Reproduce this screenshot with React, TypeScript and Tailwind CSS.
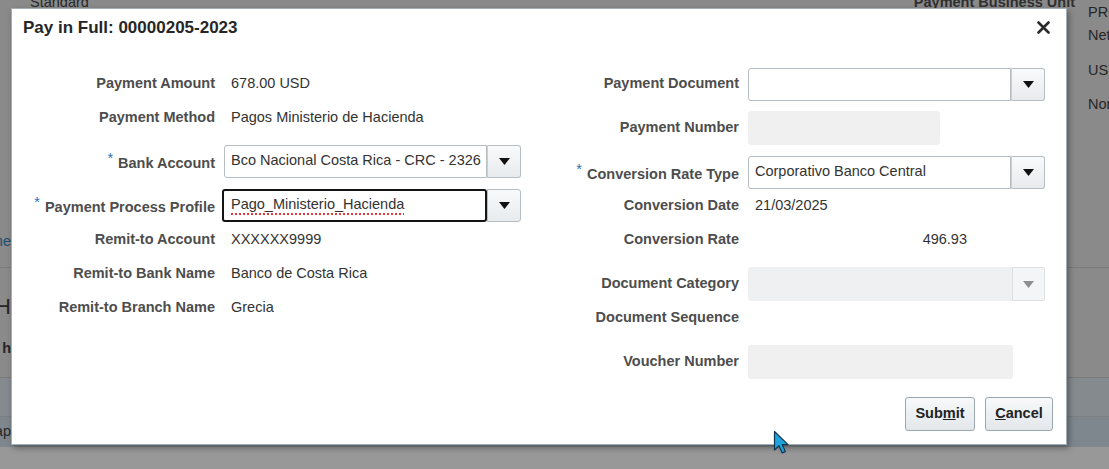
import React from "react";

const font = "font-['Liberation_Sans',Arial,sans-serif]";

function Tri({ muted = false }: { muted?: boolean }) {
  return (
    <svg width="11" height="7" viewBox="0 0 11 7">
      <polygon points="0,0 11,0 5.5,7" fill={muted ? "#8f8f8f" : "#111"} />
    </svg>
  );
}

function Label({ text, required, width }: { text: string; required?: boolean; width: string }) {
  return (
    <div className={`${width} shrink-0 text-right font-bold text-[#4d4d4d] whitespace-nowrap`}>
      {required && <span className="text-[#2b6fad] font-normal mr-[5px] align-[5px]">*</span>}
      {text}
    </div>
  );
}

function Row({
  label,
  required,
  width,
  className = "",
  children,
}: {
  label: string;
  required?: boolean;
  width: string;
  className?: string;
  children?: React.ReactNode;
}) {
  return (
    <div className={`flex items-center h-[34px] gap-[9px] ${className}`}>
      <Label text={label} required={required} width={width} />
      <div className="w-[297px] flex items-center">{children}</div>
    </div>
  );
}

function Select({ value, focused }: { value?: string; focused?: boolean }) {
  return (
    <div className="flex w-full h-[33px]">
      {focused ? (
        <div className="flex-1 -ml-[2px] flex items-center pl-[7px] border-2 border-[#141414] rounded-[3px] bg-white text-[#333]">
          <span className="underline decoration-dotted decoration-[#e0393e] decoration-[1.5px] underline-offset-[4px]">
            {value}
          </span>
        </div>
      ) : (
        <div className="flex-1 flex items-center pl-[6px] border border-[#b6bdc3] rounded-l-[3px] bg-white text-[#333] whitespace-nowrap overflow-hidden">
          {value}
        </div>
      )}
      <div
        className={`w-[34px] shrink-0 flex items-center justify-center border border-[#b6bdc3] bg-linear-to-b from-[#f9fafb] to-[#e8ebee] ${
          focused ? "rounded-r-[3px]" : "border-l-[#c9ced3] rounded-r-[3px]"
        }`}
      >
        <Tri />
      </div>
    </div>
  );
}

function Cursor() {
  return (
    <svg width="18" height="26" viewBox="0 0 18 26" className="absolute left-[773px] top-[430px]">
      <path
        d="M1.5 1.5 L1.5 20 L6 15.8 L9.2 23 L12.3 21.6 L9.2 14.6 L15 14.6 Z"
        fill="#1ea3dc"
        stroke="#0d3550"
        strokeWidth="1.2"
        strokeLinejoin="round"
      />
    </svg>
  );
}

function Strip({ children, className = "" }: { children?: React.ReactNode; className?: string }) {
  return (
    <div className={`w-[11px] shrink-0 overflow-hidden flex flex-col items-end whitespace-nowrap text-[#262626] ${className}`}>
      {children}
    </div>
  );
}

export default function App() {
  return (
    <div className={`relative w-[1109px] h-[469px] overflow-hidden bg-[#8a8a8a] text-[14.5px] ${font}`}>
      {/* dimmed page behind the dialog */}
      <div className="flex flex-col h-full">
        <div className="flex h-[268px] border-b border-[#7a7a7a]">
          <Strip className="justify-end pb-[14px]">
            <span className="text-[#1d4c70]">Name</span>
          </Strip>
          <div className="flex-1 flex items-start justify-between pl-[19px] pr-[13px] -mt-[8px] text-[#282828]">
            <span>Standard</span>
            <span className="font-bold text-[#303030]">Payment Business Unit</span>
          </div>
          <div className="w-[21px] shrink-0 overflow-hidden flex flex-col pt-[2px] whitespace-nowrap text-[#262626]">
            <span className="h-[17px]">PRO</span>
            <span className="h-[17px] mt-[6px]">Net</span>
            <span className="h-[17px] mt-[18px]">USD</span>
            <span className="h-[17px] mt-[17px]">Nor</span>
          </div>
        </div>
        <div className="flex h-[110px] border-b border-[#7a7a7a]">
          <Strip className="pt-[26px]">
            <span className="text-[22px] leading-[26px] font-light">H</span>
            <span className="font-bold mt-[18px]">h</span>
          </Strip>
        </div>
        <div className="flex h-[39px] bg-[#858a8e] border-b border-[#7b7f82]">
          <Strip />
        </div>
        <div className="flex h-[30px] bg-[#7e878d]">
          <Strip className="justify-center">
            <span>Map</span>
          </Strip>
        </div>
        <div className="flex-1 bg-[#989898]" />
      </div>

      {/* dialog */}
      <div className="absolute left-[11px] top-[8px] w-[1056px] h-[437px] bg-white border border-[#a3adb6] shadow-[2px_3px_6px_rgba(0,0,0,0.35)] flex flex-col">
        <div className="h-[37px] flex items-center justify-between pl-[11px] pr-[16px]">
          <h1 className="text-[17px] font-bold text-[#262626]">Pay in Full: 00000205-2023</h1>
          <svg width="13" height="13" viewBox="0 0 13 13">
            <path d="M1.5 1.5 L11.5 11.5 M11.5 1.5 L1.5 11.5" stroke="#2a2a2a" strokeWidth="2.6" strokeLinecap="round" />
          </svg>
        </div>

        <div className="flex pt-[21px]">
          {/* left column */}
          <div className="w-[509px] flex flex-col">
            <Row label="Payment Amount" width="w-[203px]">
              <span className="pl-[7px] text-[#333]">678.00 USD</span>
            </Row>
            <Row label="Payment Method" width="w-[203px]">
              <span className="pl-[7px] text-[#333]">Pagos Ministerio de Hacienda</span>
            </Row>
            <Row label="Bank Account" required width="w-[203px]" className="mt-[9px]">
              <Select value="Bco Nacional Costa Rica - CRC - 2326" />
            </Row>
            <Row label="Payment Process Profile" required width="w-[203px]" className="mt-2.5">
              <Select value="Pago_Ministerio_Hacienda" focused />
            </Row>
            <Row label="Remit-to Account" width="w-[203px]" className="mt-px">
              <span className="pl-[7px] text-[#333]">XXXXXX9999</span>
            </Row>
            <Row label="Remit-to Bank Name" width="w-[203px]">
              <span className="pl-[7px] text-[#333]">Banco de Costa Rica</span>
            </Row>
            <Row label="Remit-to Branch Name" width="w-[203px]">
              <span className="pl-[7px] text-[#333]">Grecia</span>
            </Row>
          </div>

          {/* right column */}
          <div className="w-[524px] flex flex-col">
            <Row label="Payment Document" width="w-[218px]">
              <Select />
            </Row>
            <Row label="Payment Number" width="w-[218px]" className="mt-2.5">
              <div className="w-[192px] h-[34px] bg-[#f0f0f1] rounded-[3px]" />
            </Row>
            <Row label="Conversion Rate Type" required width="w-[218px]" className="mt-2.5">
              <Select value="Corporativo Banco Central" />
            </Row>
            <Row label="Conversion Date" width="w-[218px]">
              <span className="pl-[7px] text-[#333]">21/03/2025</span>
            </Row>
            <Row label="Conversion Rate" width="w-[218px]">
              <span className="w-[219px] text-right text-[#333]">496.93</span>
            </Row>
            <Row label="Document Category" width="w-[218px]" className="mt-2.5">
              <div className="flex w-full h-[34px] bg-[#eff0f1] rounded-[3px]">
                <div className="flex-1" />
                <div className="w-[33px] flex items-center justify-center bg-[#f4f5f6] border border-[#dde0e3] rounded-r-[3px]">
                  <Tri muted />
                </div>
              </div>
            </Row>
            <Row label="Document Sequence" width="w-[218px]" />
            <Row label="Voucher Number" width="w-[218px]" className="mt-2.5">
              <div className="w-[265px] h-[34px] bg-[#f0f0f1] rounded-[3px]" />
            </Row>
          </div>
        </div>

        <div className="flex justify-end gap-[10px] pr-[13px] mt-[18px]">
          <button className="w-[70px] h-[34px] rounded-[3px] border border-[#9aa6b0] bg-linear-to-b from-[#f7f9fa] to-[#e3e7ea] font-bold text-[#222]">
            Sub<span className="underline">m</span>it
          </button>
          <button className="w-[68px] h-[34px] rounded-[3px] border border-[#9aa6b0] bg-linear-to-b from-[#f7f9fa] to-[#e3e7ea] font-bold text-[#222]">
            <span className="underline">C</span>ancel
          </button>
        </div>
      </div>

      <Cursor />
    </div>
  );
}
